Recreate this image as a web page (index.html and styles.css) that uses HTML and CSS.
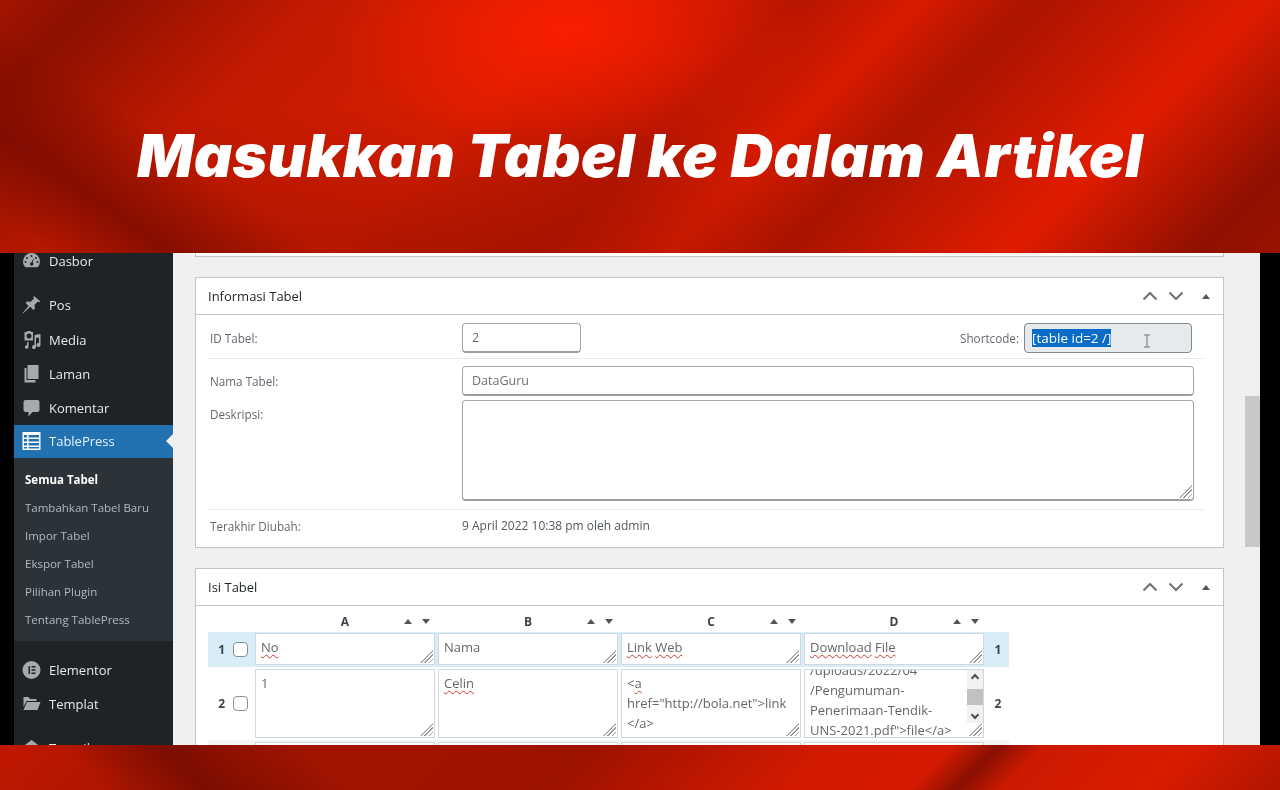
FILE: index.html
```html
<!DOCTYPE html>
<html lang="id">
<head>
    <meta charset="UTF-8">
    <meta name="viewport" content="width=device-width, initial-scale=1.0">
    <title>Masukkan Tabel ke Dalam Artikel</title>
    <link rel="stylesheet" href="styles.css">
</head>
<body>
    <header class="banner">
        <h1>Masukkan Tabel ke Dalam Artikel</h1>
    </header>

    <div class="screen">
        <nav class="sidebar">
            <ul class="menu">
                <li class="menu-item menu-first">
                    <svg class="icon" viewBox="0 0 18 18"><path fill-rule="evenodd" d="M9 1a8.5 8.5 0 0 0-8.5 8.5c0 2.300.9 4.300 2.400 5.800h12.200a8.500 8.500 0 0 0 2.400-5.800A8.500 8.500 0 0 0 9 1zM9 3a1 1 0 1 1 0 2 1 1 0 0 1 0-2zM4.500 5a1 1 0 1 1 0 2 1 1 0 0 1 0-2zM13.500 5a1 1 0 1 1 0 2 1 1 0 0 1 0-2zM3 9a1 1 0 1 1 0 2 1 1 0 0 1 0-2zM15 9a1 1 0 1 1 0 2 1 1 0 0 1 0-2zM11.500 5.500l-1.300 5.200a1.600 1.600 0 1 1-1.400-.300z"/></svg>
                    Dasbor
                </li>
                <li class="menu-item menu-gap">
                    <svg class="icon" viewBox="0 0 18 18"><path d="M11.500 0l6.500 5.500-1.800.7-1-.7-3.200 3.400.3 3.800-1.500 1.300-3-3.200L1 17l-1 .5.500-1 5.600-6.600-3-3 1.300-1.500 3.800.3 3.300-3.300-.6-1.100z"/></svg>
                    Pos
                </li>
                <li class="menu-item menu-tall">
                    <svg class="icon" viewBox="0 0 18 18"><path fill-rule="evenodd" d="M2 1h2l1-1h3l1 1h1.500v8.500H2zM6.500 2.500a2.500 2.500 0 1 0 0 5 2.500 2.500 0 0 0 0-5z"/><path d="M12 4l6-1v11a2 2 0 1 1-1.500-1.900V6.500L13.500 7v9a2 2 0 1 1-1.500-1.900zM6 11v5a1.800 1.800 0 1 1-1.500-1.800V11z"/></svg>
                    Media
                </li>
                <li class="menu-item">
                    <svg class="icon" viewBox="0 0 18 18"><path d="M5 0h11v14H5z"/><path d="M2 3h2v12h9v2.500H2z"/></svg>
                    Laman
                </li>
                <li class="menu-item">
                    <svg class="icon" viewBox="0 0 18 18"><path d="M3 1h12a2 2 0 0 1 2 2v8a2 2 0 0 1-2 2h-5l-4 4.500V13H3a2 2 0 0 1-2-2V3a2 2 0 0 1 2-2z"/></svg>
                    Komentar
                </li>
                <li class="menu-item menu-current">
                    <svg class="icon icon-table" viewBox="0 0 18 18"><path fill-rule="evenodd" d="M0 0h18v18H0zM1.500 3v2.500h3V3zM6 3v2.500h10.500V3zM1.500 7v2.500h3V7zM6 7v2.500h10.500V7zM1.500 11v2.500h3V11zM6 11v2.500h10.500V11zM1.500 15v1.500h3V15zM6 15v1.500h10.500V15z"/></svg>
                    TablePress
                </li>
                <li>
                    <ul class="submenu">
                        <li class="submenu-current">Semua Tabel</li>
                        <li>Tambahkan Tabel Baru</li>
                        <li>Impor Tabel</li>
                        <li>Ekspor Tabel</li>
                        <li>Pilihan Plugin</li>
                        <li>Tentang TablePress</li>
                    </ul>
                </li>
                <li class="menu-item menu-gap-sub menu-tall">
                    <svg class="icon" viewBox="0 0 18 18"><path fill-rule="evenodd" d="M9 0a9 9 0 1 1 0 18A9 9 0 0 1 9 0zM6 5v8h1.500V5zM9 5v1.500h4V5zM9 8.200v1.500h4V8.200zM9 11.500V13h4v-1.500z"/></svg>
                    Elementor
                </li>
                <li class="menu-item">
                    <svg class="icon" viewBox="0 0 18 18"><path d="M1 2h5l1.500 2H14v2H4L1 12z"/><path d="M4.500 7H18l-3 8H1z"/></svg>
                    Templat
                </li>
                <li class="menu-item menu-gap">
                    <svg class="icon" viewBox="0 0 18 18"><path d="M9 1L1 7v10h16V7z"/></svg>
                    Tampilan
                </li>
            </ul>
        </nav>

        <main class="content">
            <div class="card card-stub"></div>

            <section class="card">
                <div class="card-head">
                    <h2>Informasi Tabel</h2>
                    <div class="card-tools">
                        <svg class="chevron" viewBox="0 0 16 10"><path d="M1.500 8.500L8 2l6.500 6.500"/></svg>
                        <svg class="chevron" viewBox="0 0 16 10"><path d="M1.500 1.500L8 8l6.500-6.500"/></svg>
                        <span class="tri-up tri-tool"></span>
                    </div>
                </div>
                <div class="info">
                    <div class="info-row info-row-first">
                        <span class="info-label">ID Tabel:</span>
                        <div class="info-value info-split">
                            <div class="field field-id">2</div>
                            <div class="shortcode">
                                <span class="info-label">Shortcode:</span>
                                <div class="field field-code">
                                    <span class="selected">[table id=2 /]</span>
                                    <svg class="ibeam" viewBox="0 0 8 14"><path d="M1 1h6M4 1v12M1 13h6"/></svg>
                                </div>
                            </div>
                        </div>
                    </div>
                    <div class="info-row info-row-name">
                        <span class="info-label">Nama Tabel:</span>
                        <div class="info-value"><div class="field">DataGuru</div></div>
                    </div>
                    <div class="info-row info-row-desc">
                        <span class="info-label">Deskripsi:</span>
                        <div class="info-value"><div class="field field-area"></div></div>
                    </div>
                    <div class="info-row info-row-last">
                        <span class="info-label">Terakhir Diubah:</span>
                        <div class="info-value info-text">9 April 2022 10:38 pm oleh admin</div>
                    </div>
                </div>
            </section>

            <section class="card card-table">
                <div class="card-head">
                    <h2>Isi Tabel</h2>
                    <div class="card-tools">
                        <svg class="chevron" viewBox="0 0 16 10"><path d="M1.500 8.500L8 2l6.500 6.500"/></svg>
                        <svg class="chevron" viewBox="0 0 16 10"><path d="M1.500 1.500L8 8l6.500-6.500"/></svg>
                        <span class="tri-up tri-tool"></span>
                    </div>
                </div>
                <div class="sheet">
                    <div class="sheet-row sheet-head">
                        <span></span>
                        <div class="col-head"><b>A</b><span class="col-arrows"><i class="tri-up"></i><i class="tri-down"></i></span></div>
                        <div class="col-head"><b>B</b><span class="col-arrows"><i class="tri-up"></i><i class="tri-down"></i></span></div>
                        <div class="col-head"><b>C</b><span class="col-arrows"><i class="tri-up"></i><i class="tri-down"></i></span></div>
                        <div class="col-head"><b>D</b><span class="col-arrows"><i class="tri-up"></i><i class="tri-down"></i></span></div>
                        <span></span>
                    </div>
                    <div class="sheet-row sheet-row-head">
                        <div class="row-num">1 <span class="check"></span></div>
                        <div class="cell"><span class="typo">No</span></div>
                        <div class="cell">Nama</div>
                        <div class="cell"><span class="typo">Link</span> <span class="typo">Web</span></div>
                        <div class="cell"><span class="typo">Download</span> <span class="typo">File</span></div>
                        <div class="row-end">1</div>
                    </div>
                    <div class="sheet-row sheet-row-body">
                        <div class="row-num">2 <span class="check"></span></div>
                        <div class="cell">1</div>
                        <div class="cell"><span class="typo">Celin</span></div>
                        <div class="cell">&lt;<span class="typo">a</span><br>href="http://bola.net"&gt;link<br>&lt;/a&gt;</div>
                        <div class="cell cell-scroll">
                            <div class="cell-scrolled">/uploads/2022/04<br>/Pengumuman-<br>Penerimaan-Tendik-<br>UNS-2021.pdf"&gt;file&lt;/a&gt;</div>
                            <div class="cell-bar"><span class="tri-bar-up"></span><span class="cell-thumb"></span><span class="tri-bar-down"></span></div>
                        </div>
                        <div class="row-end">2</div>
                    </div>
                    <div class="sheet-row sheet-row-next">
                        <span></span>
                        <div class="cell"></div>
                        <div class="cell"></div>
                        <div class="cell"></div>
                        <div class="cell"></div>
                        <span></span>
                    </div>
                </div>
            </section>
        </main>

        <div class="scrollbar"><div class="scrollbar-thumb"></div></div>
    </div>

    <footer class="strip"></footer>
</body>
</html>
```

FILE: styles.css
```css
* {
    box-sizing: border-box;
}
body {
    margin: 0;
    height: 790px;
    overflow: hidden;
    display: flex;
    flex-direction: column;
    font-family: "Open Sans", Arial, sans-serif;
    background-color: #000;
}

/* red banner */
.banner {
    height: 253px;
    flex: none;
    display: flex;
    align-items: center;
    justify-content: center;
    padding-top: 58px;
    background-color: #c41a00;
    background-image:
        radial-gradient(ellipse 240px 120px at 570px 30px, rgba(255, 30, 0, 0.85), rgba(255, 30, 0, 0) 100%),
        linear-gradient(35deg, rgba(125, 12, 0, 0) 3%, rgba(125, 12, 0, 0.85) 10.5%, rgba(125, 12, 0, 0) 20%),
        radial-gradient(ellipse 520px 150px at 400px 253px, rgba(150, 18, 0, 0.6), rgba(150, 18, 0, 0) 100%),
        linear-gradient(135deg, #a51400 0%, #8c1000 6%, #c01a00 20%, #d81d00 38%, #b41500 51.8%, #d81b00 60%, #aa1400 67.4%, #e01c00 82.2%, #8f1000 94.4%, #9a1200 100%);
}
.banner h1 {
    margin: 0;
    color: #fff;
    font-family: Inter, "Open Sans", sans-serif;
    font-size: 59px;
    font-weight: 900;
    font-style: italic;
    line-height: 1;
    letter-spacing: 0.5px;
    white-space: nowrap;
}
.strip {
    height: 45px;
    flex: none;
    background-image:
        linear-gradient(45deg, rgba(115, 12, 0, 0) 8%, rgba(115, 12, 0, 0.85) 15.7%, rgba(115, 12, 0, 0) 26%),
        linear-gradient(135deg, #c01800 0%, #b01600 10%, #a01400 24%, #9e1200 45%, #d01a00 62%, #d41a00 72%, #8a1000 75.5%, #cc1a00 79%, #d81c00 90%, #b01500 100%);
}

/* screenshot area */
.screen {
    height: 492px;
    flex: none;
    display: flex;
    overflow: hidden;
    padding: 0 20px 0 14px;
    filter: blur(0.6px);
}

/* admin sidebar */
.sidebar {
    width: 159px;
    flex: none;
    background-color: #1d2327;
    color: #e6e8e9;
    font-size: 13px;
}
.menu, .submenu {
    list-style: none;
    margin: 0;
    padding: 0;
}
.menu-first {
    margin-top: -9px;
}
.menu-item {
    height: 34px;
    display: flex;
    align-items: center;
    gap: 8px;
    padding-left: 8px;
    position: relative;
}
.menu-tall {
    height: 35px;
}
.menu-gap {
    margin-top: 10px;
}
.menu-gap-sub {
    margin-top: 11px;
}
.icon {
    width: 19px;
    height: 18px;
    flex: none;
    fill: #a7aaad;
}
.menu-current {
    height: 33px;
    padding-bottom: 1px;
    background-color: #2271b1;
    color: #e6f1f8;
}
.menu-current::after {
    content: "";
    position: absolute;
    right: 0;
    top: 9px;
    border: 7px solid transparent;
    border-left: 0;
    border-right-color: #f0f0f1;
}
.icon-table {
    fill: #fff;
}
.submenu {
    background-color: #2c3338;
    padding: 8px 0 7px;
    font-size: 11.5px;
    color: #b4b9be;
}
.submenu li {
    height: 28px;
    line-height: 28px;
    padding-left: 11px;
}
.submenu .submenu-current {
    color: #fff;
    font-weight: 700;
}

/* content */
.content {
    flex: 1;
    min-width: 0;
    padding: 0 21px 0 22px;
    background-color: #f0f0f1;
}
.card {
    background-color: #fff;
    border: 1px solid #c3c4c7;
    margin-bottom: 20px;
}
.card-stub {
    height: 4px;
    border-top: 0;
}
.card-head {
    height: 37px;
    display: flex;
    align-items: center;
    justify-content: space-between;
    padding: 0 13px 0 12px;
    border-bottom: 1px solid #c3c4c7;
}
.card-head h2 {
    margin: 0;
    font-size: 13px;
    font-weight: 500;
    color: #1d2327;
}
.card-tools {
    display: flex;
    align-items: center;
    gap: 10px;
}
.chevron {
    width: 16px;
    height: 10px;
    fill: none;
    stroke: #6d7075;
    stroke-width: 2;
}
.tri-up, .tri-down {
    display: inline-block;
    width: 0;
    height: 0;
    border-left: 4px solid transparent;
    border-right: 4px solid transparent;
}
.tri-up {
    border-bottom: 5px solid #50575e;
}
.tri-down {
    border-top: 5px solid #50575e;
}
.tri-tool {
    margin-left: 8px;
}

/* table info rows */
.info {
    padding: 0 19px 0 12px;
    font-size: 11.7px;
    color: #50575e;
}
.info-row {
    display: grid;
    grid-template-columns: 254px 732px;
}
.info-row-first {
    padding: 8px 0 5px;
    border-bottom: 1px solid #e8e9ea;
    align-items: center;
}
.info-row-name {
    padding-top: 7px;
    align-items: center;
}
.info-row-desc {
    padding: 4px 0 8px;
    border-bottom: 1px solid #e8e9ea;
}
.info-row-last {
    height: 37px;
    padding-bottom: 6px;
    align-items: center;
}
.info-label {
    padding-left: 2px;
    color: #646970;
}
.info-row-desc .info-label {
    padding-top: 6px;
}
.info-split {
    display: flex;
    justify-content: space-between;
    padding-right: 2px;
}
.info-text {
    color: #50575e;
    font-size: 12px;
}
.field {
    height: 30px;
    line-height: 28px;
    padding: 0 9px;
    font-size: 12.5px;
    color: #6b7075;
    background-color: #fff;
    border: 1px solid #a4a7aa;
    border-bottom: 2px solid #9c9fa2;
    border-radius: 4px;
}
.field-id {
    width: 119px;
}
.field-area {
    position: relative;
    height: 101px;
}
.field-area::after, .cell::after {
    content: "";
    position: absolute;
    right: 1px;
    bottom: 1px;
    width: 13px;
    height: 13px;
    background: repeating-linear-gradient(135deg, #9a9a9a 0, #9a9a9a 1px, #fff 1px, #fff 3px);
    clip-path: polygon(100% 0, 100% 100%, 0 100%);
}
.shortcode {
    display: flex;
    align-items: center;
    gap: 5px;
}
.field-code {
    position: relative;
    width: 168px;
    padding: 0 7px;
    background-color: #e6eaed;
    border: 1px solid #7e8993;
    font-size: 13.5px;
    color: #fff;
}
.selected {
    background-color: #0a6cc9;
    display: inline-block;
    line-height: 18px;
}
.ibeam {
    position: absolute;
    left: 118px;
    top: 10px;
    width: 8px;
    height: 14px;
    fill: none;
    stroke: #6f7478;
    stroke-width: 1;
}

/* table editor */
.sheet {
    padding: 0 0 0 12px;
    color: #666;
}
.sheet-row {
    display: grid;
    grid-template-columns: 44px repeat(4, 180px) 22px;
    width: 801px;
    column-gap: 3px;
}
.sheet-head {
    height: 26px;
    padding-top: 4px;
    align-items: center;
}
.col-head {
    display: grid;
    grid-template-columns: 1fr auto 1fr;
    font-size: 12px;
    color: #3c434a;
}
.col-head b {
    grid-column: 2;
}
.col-arrows {
    grid-column: 3;
    justify-self: end;
    display: flex;
    gap: 10px;
    align-items: center;
    padding-right: 5px;
}
.sheet-row-head {
    height: 35px;
    padding: 1px 0 2px;
    background-color: #d9edf7;
}
.sheet-row-body {
    height: 69px;
    margin-top: 2px;
}
.sheet-row-next {
    height: 40px;
    margin-top: 2px;
    padding-top: 2px;
    background-color: #f4f4f4;
}
.row-num {
    display: flex;
    align-items: center;
    justify-content: flex-end;
    gap: 8px;
    padding-right: 4px;
    font-size: 12px;
    font-weight: 700;
    color: #3c434a;
}
.row-end {
    display: flex;
    align-items: center;
    justify-content: center;
    font-size: 12px;
    font-weight: 700;
    color: #3c434a;
}
.check {
    width: 15px;
    height: 15px;
    background-color: #fff;
    border: 1px solid #8c8f94;
    border-radius: 4px;
}
.cell {
    position: relative;
    padding: 3px 5px;
    font-size: 13px;
    line-height: 20px;
    background-color: #fff;
    border: 1px solid #ccd9e2;
    overflow: hidden;
    white-space: nowrap;
}
.typo {
    text-decoration: underline wavy #d0392b 1px;
    text-underline-offset: 2px;
}
.cell-scrolled {
    margin-top: -13px;
}
.cell-bar {
    position: absolute;
    right: 0;
    top: 0;
    width: 16px;
    height: 53px;
    background-color: #f1f1f1;
    display: flex;
    flex-direction: column;
    align-items: center;
    justify-content: space-between;
    padding: 5px 0;
}
.tri-bar-up, .tri-bar-down {
    width: 6px;
    height: 6px;
    border-left: 2px solid #505050;
    border-top: 2px solid #505050;
    transform: rotate(45deg);
}
.tri-bar-down {
    transform: rotate(225deg);
}
.cell-thumb {
    width: 16px;
    height: 16px;
    background-color: #c1c1c1;
}

/* page scrollbar */
.scrollbar {
    width: 15px;
    flex: none;
    background-color: #f0f0f1;
    padding-top: 143px;
}
.scrollbar-thumb {
    height: 151px;
    background-color: #c8c8c8;
}
```
